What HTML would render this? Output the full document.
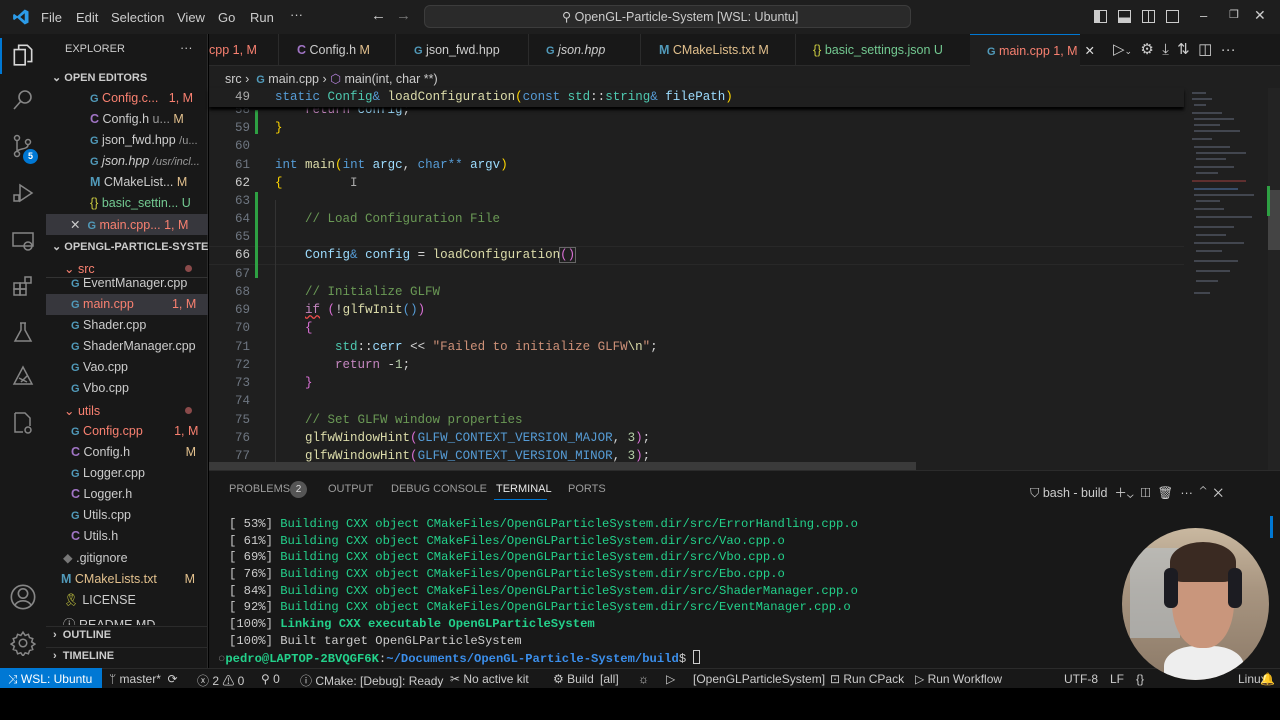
<!DOCTYPE html>
<html><head><meta charset="utf-8"><style>
*{margin:0;padding:0;box-sizing:border-box}
body{width:1280px;height:720px;background:#000;position:relative;overflow:hidden;font-family:"Liberation Sans",sans-serif;color:#ccc;font-size:12.5px}
.a{position:absolute;white-space:pre}
.k{color:#569cd6}.t{color:#4ec9b0}.f{color:#dcdcaa}.v{color:#9cdcfe}.c{color:#6a9955}.s{color:#ce9178}.p{color:#c586c0}.n{color:#b5cea8}.y{color:#ffd700}.pk{color:#da70d6}
.ln{position:absolute;left:215px;width:35px;text-align:right;color:#6e7681;font-family:"Liberation Mono",monospace;font-size:12.5px}
.cl{position:absolute;left:275px;font-family:"Liberation Mono",monospace;font-size:12.5px;color:#d4d4d4;white-space:pre}
.sb{position:absolute;white-space:pre;font-size:12.5px;color:#cccccc}
.st{position:absolute;white-space:pre;font-size:12px;color:#cccccc;top:672px}
.tl{position:absolute;left:229px;font-family:"Liberation Mono",monospace;font-size:12.2px;color:#ccc;white-space:pre}
.g{color:#23d18b}.gb{color:#23d18b;font-weight:bold}
.ic{color:#519aba;font-weight:bold;font-size:11px}
.cp{color:#a074c4;font-weight:bold}
.mm{position:absolute;height:2px;background:#5a6070;opacity:.6}
</style></head><body>
<div class="a" style="left:0;top:0;width:1280px;height:34px;background:#1e1e1e"></div>
<svg class="a" style="left:12px;top:8px" width="18" height="18" viewBox="0 0 24 24"><path d="M17 2 L22 4.5 V19.5 L17 22 L7 13 L3 16 L1.5 15 V9 L3 8 L7 11 Z M17 7 L11 12 L17 17 Z" fill="#2c9be8"/></svg>
<div class="a" style="left:41px;top:10px;font-size:13px">File</div>
<div class="a" style="left:76px;top:10px;font-size:13px">Edit</div>
<div class="a" style="left:111px;top:10px;font-size:13px">Selection</div>
<div class="a" style="left:177px;top:10px;font-size:13px">View</div>
<div class="a" style="left:218px;top:10px;font-size:13px">Go</div>
<div class="a" style="left:250px;top:10px;font-size:13px">Run</div>
<div class="a" style="left:290px;top:7px;font-size:13px">···</div>
<div class="a" style="left:371px;top:7px;font-size:15px;color:#ccc">←</div>
<div class="a" style="left:396px;top:7px;font-size:15px;color:#777">→</div>
<div class="a" style="left:424px;top:5px;width:487px;height:23px;background:#2a2a2a;border:1px solid #3c3c3c;border-radius:6px"></div>
<div class="a" style="left:562px;top:9px;font-size:12.5px">⚲ OpenGL-Particle-System [WSL: Ubuntu]</div>
<div class="a" style="left:1094px;top:10px;width:13px;height:13px;border:1.5px solid #ccc;background:linear-gradient(90deg,#ccc 45%,transparent 45%)"></div>
<div class="a" style="left:1118px;top:10px;width:13px;height:13px;border:1.5px solid #ccc;background:linear-gradient(0deg,#ccc 40%,transparent 40%)"></div>
<div class="a" style="left:1142px;top:10px;width:13px;height:13px;border:1.5px solid #ccc;background:linear-gradient(90deg,transparent 45%,#ccc 45%,#ccc 55%,transparent 55%)"></div>
<div class="a" style="left:1166px;top:10px;width:13px;height:13px;border:1.5px solid #ccc"></div>
<div class="a" style="left:1200px;top:8px;font-size:13px">–</div>
<div class="a" style="left:1229px;top:8px;font-size:11px">❐</div>
<div class="a" style="left:1254px;top:7px;font-size:14px">✕</div>
<div class="a" style="left:0;top:34px;width:46px;height:634px;background:#181818"></div>
<div class="a" style="left:0;top:38px;width:2px;height:36px;background:#0078d4"></div>
<svg class="a" style="left:10px;top:42px" width="26" height="26" viewBox="0 0 24 24" fill="none" stroke="#d7d7d7" stroke-width="1.5"><path d="M8 7V3h8l4 4v11h-4M4 7h10v14H4z"/></svg>
<svg class="a" style="left:11px;top:88px" width="24" height="24" viewBox="0 0 24 24" fill="none" stroke="#868686" stroke-width="1.6"><circle cx="14" cy="9" r="6"/><path d="M10 13L3 21"/></svg>
<svg class="a" style="left:11px;top:134px" width="24" height="26" viewBox="0 0 24 26" fill="none" stroke="#868686" stroke-width="1.5"><circle cx="6" cy="4" r="2.5"/><circle cx="6" cy="20" r="2.5"/><circle cx="17" cy="8" r="2.5"/><path d="M6 7v10M17 11c0 5-11 3-11 7"/></svg>
<div class="a" style="left:23px;top:149px;width:15px;height:15px;border-radius:50%;background:#0078d4;color:#fff;font-size:9px;text-align:center;line-height:15px;font-weight:bold">5</div>
<svg class="a" style="left:11px;top:181px" width="24" height="24" viewBox="0 0 24 24" fill="none" stroke="#868686" stroke-width="1.5"><path d="M9 4l12 8-12 8zM3 14h5v6H3z"/></svg>
<svg class="a" style="left:11px;top:229px" width="24" height="24" viewBox="0 0 24 24" fill="none" stroke="#868686" stroke-width="1.5"><rect x="2" y="4" width="20" height="13"/><circle cx="17" cy="17" r="4"/></svg>
<svg class="a" style="left:11px;top:274px" width="24" height="24" viewBox="0 0 24 24" fill="none" stroke="#868686" stroke-width="1.5"><rect x="3" y="9" width="6" height="6"/><rect x="9" y="9" width="6" height="6"/><rect x="3" y="15" width="6" height="6"/><rect x="9" y="15" width="6" height="6"/><rect x="14" y="3" width="6" height="6"/></svg>
<svg class="a" style="left:11px;top:320px" width="24" height="24" viewBox="0 0 24 24" fill="none" stroke="#868686" stroke-width="1.5"><path d="M9 3h6M10 3v7L4 21h16L14 10V3"/></svg>
<svg class="a" style="left:11px;top:364px" width="24" height="24" viewBox="0 0 24 24" fill="none" stroke="#868686" stroke-width="1.5"><path d="M12 3L3 20h18zM8 14l8 4M16 12l-6 6"/></svg>
<svg class="a" style="left:11px;top:410px" width="24" height="26" viewBox="0 0 24 26" fill="none" stroke="#868686" stroke-width="1.5"><path d="M4 3h10l5 5v8M4 3v19h8"/><circle cx="17" cy="20" r="3"/></svg>
<svg class="a" style="left:9px;top:583px" width="28" height="28" viewBox="0 0 24 24" fill="none" stroke="#868686" stroke-width="1.4"><circle cx="12" cy="12" r="10"/><circle cx="12" cy="9" r="4"/><path d="M5 19c3-5 11-5 14 0"/></svg>
<svg class="a" style="left:10px;top:630px" width="26" height="26" viewBox="0 0 24 24" fill="none" stroke="#868686" stroke-width="1.4"><circle cx="12" cy="12" r="3.5"/><path d="M12 2l2 3 3-1 1 3 3 1-1 3 3 2-3 2 1 3-3 1-1 3-3-1-2 3-2-3-3 1-1-3-3-1 1-3-3-2 3-2-1-3 3-1 1-3 3 1z"/></svg>
<div class="a" style="left:46px;top:34px;width:162px;height:634px;background:#181818;border-right:1px solid #2b2b2b"></div>
<div class="sb" style="left:65px;top:43px;font-size:11px">EXPLORER</div>
<div class="sb" style="left:180px;top:41px">···</div>
<div class="sb" style="left:52px;top:71px;font-size:11px;font-weight:bold">⌄ OPEN EDITORS</div>
<div class="sb" style="left:90px;top:91px"><span class="ic">G</span> <span style="color:#f88070">Config.c...</span>   <span style="color:#f88070">1, M</span></div>
<div class="sb" style="left:90px;top:112px"><span class="cp">C</span> Config.h <span style="color:#999">u...</span> <span style="color:#e2c08d">M</span></div>
<div class="sb" style="left:90px;top:133px"><span class="ic">G</span> json_fwd.hpp <span style="color:#999;font-size:11px">/u...</span></div>
<div class="sb" style="left:90px;top:154px"><span class="ic">G</span> <i>json.hpp</i> <span style="color:#999;font-size:11px"><i>/usr/incl...</i></span></div>
<div class="sb" style="left:90px;top:175px"><span style="color:#519aba;font-weight:bold">M</span> CMakeList... <span style="color:#e2c08d">M</span></div>
<div class="sb" style="left:90px;top:196px"><span style="color:#cbcb41">{}</span> <span style="color:#73c991">basic_settin...</span> <span style="color:#73c991">U</span></div>
<div class="a" style="left:46px;top:214px;width:162px;height:21px;background:#37373d"></div>
<div class="sb" style="left:70px;top:217px"><span>✕</span>  <span class="ic">G</span> <span style="color:#f88070">main.cpp...</span> <span style="color:#f88070">1, M</span></div>
<div class="sb" style="left:52px;top:240px;font-size:11px;font-weight:bold">⌄ OPENGL-PARTICLE-SYSTE...</div>
<div class="sb" style="left:64px;top:261px;color:#f88070">⌄ src</div>
<div class="a" style="left:185px;top:265px;width:7px;height:7px;border-radius:50%;background:#8a4a4a"></div>
<div class="a" style="left:46px;top:277px;width:162px;height:1px;background:#333"></div>
<div class="sb" style="left:71px;top:276px"><span class="ic">G</span> EventManager.cpp</div>
<div class="a" style="left:46px;top:294px;width:162px;height:21px;background:#37373d"></div>
<div class="sb" style="left:71px;top:297px"><span class="ic">G</span> <span style="color:#f88070">main.cpp</span>           <span style="color:#f88070">1, M</span></div>
<div class="sb" style="left:71px;top:318px"><span class="ic">G</span> Shader.cpp</div>
<div class="sb" style="left:71px;top:339px"><span class="ic">G</span> ShaderManager.cpp</div>
<div class="sb" style="left:71px;top:360px"><span class="ic">G</span> Vao.cpp</div>
<div class="sb" style="left:71px;top:381px"><span class="ic">G</span> Vbo.cpp</div>
<div class="sb" style="left:64px;top:403px;color:#f88070">⌄ utils</div>
<div class="a" style="left:185px;top:407px;width:7px;height:7px;border-radius:50%;background:#8a4a4a"></div>
<div class="sb" style="left:71px;top:424px"><span class="ic">G</span> <span style="color:#f88070">Config.cpp</span>         <span style="color:#f88070">1, M</span></div>
<div class="sb" style="left:71px;top:445px"><span class="cp">C</span> Config.h                <span style="color:#e2c08d">M</span></div>
<div class="sb" style="left:71px;top:466px"><span class="ic">G</span> Logger.cpp</div>
<div class="sb" style="left:71px;top:487px"><span class="cp">C</span> Logger.h</div>
<div class="sb" style="left:71px;top:508px"><span class="ic">G</span> Utils.cpp</div>
<div class="sb" style="left:71px;top:529px"><span class="cp">C</span> Utils.h</div>
<div class="sb" style="left:63px;top:550px"><span style="color:#777">◆</span> .gitignore</div>
<div class="sb" style="left:61px;top:572px"><span style="color:#519aba;font-weight:bold">M</span> <span style="color:#e2c08d">CMakeLists.txt</span>        <span style="color:#e2c08d">M</span></div>
<div class="sb" style="left:63px;top:593px"><span style="color:#cbcb41">🎗</span> LICENSE</div>
<div class="sb" style="left:63px;top:614px;height:11px;overflow:hidden">ⓘ README.MD</div>
<div class="a" style="left:46px;top:626px;width:162px;height:1px;background:#2b2b2b"></div>
<div class="sb" style="left:53px;top:629px;font-size:11px;font-weight:bold">›  OUTLINE</div>
<div class="a" style="left:46px;top:647px;width:162px;height:1px;background:#2b2b2b"></div>
<div class="sb" style="left:53px;top:650px;font-size:11px;font-weight:bold">›  TIMELINE</div>
<div class="a" style="left:209px;top:34px;width:1071px;height:32px;background:#181818;border-bottom:1px solid #2b2b2b"></div>
<div class="sb" style="left:209px;top:43px;color:#f88070">cpp 1, M</div>
<div class="a" style="left:278px;top:34px;width:1px;height:32px;background:#2b2b2b"></div>
<div class="sb" style="left:297px;top:43px"><span class="cp">C</span> Config.h <span style="color:#e2c08d">M</span></div>
<div class="a" style="left:395px;top:34px;width:1px;height:32px;background:#2b2b2b"></div>
<div class="sb" style="left:414px;top:43px"><span class="ic">G</span> json_fwd.hpp</div>
<div class="a" style="left:528px;top:34px;width:1px;height:32px;background:#2b2b2b"></div>
<div class="sb" style="left:546px;top:43px"><span class="ic">G</span> <i>json.hpp</i></div>
<div class="a" style="left:640px;top:34px;width:1px;height:32px;background:#2b2b2b"></div>
<div class="sb" style="left:659px;top:43px"><span style="color:#519aba;font-weight:bold">M</span> <span style="color:#e2c08d">CMakeLists.txt M</span></div>
<div class="a" style="left:795px;top:34px;width:1px;height:32px;background:#2b2b2b"></div>
<div class="sb" style="left:813px;top:43px"><span style="color:#cbcb41">{}</span> <span style="color:#73c991">basic_settings.json U</span></div>
<div class="a" style="left:970px;top:34px;width:110px;height:33px;background:#1f1f1f;border-top:1px solid #0078d4"></div>
<div class="sb" style="left:987px;top:43px"><span class="ic">G</span> <span style="color:#f88070">main.cpp 1, M</span>  <span style="color:#ddd">✕</span></div>
<div class="sb" style="left:1113px;top:40px;font-size:15px;color:#ccc">▷<span style="font-size:9px">⌄</span>  ⚙  ⤓  ⇅  ◫  ···</div>
<div class="a" style="left:209px;top:66px;width:1071px;height:404px;background:#1f1f1f"></div>
<div class="sb" style="left:225px;top:71px">src ›  <span class="ic">G</span> main.cpp › <span style="color:#b180d7">⬡</span> main(int, char **)</div>
<div class="a" style="left:209px;top:88px;width:975px;height:19px;background:#1f1f1f;box-shadow:0 3px 3px #000;z-index:2"></div>
<div class="ln" style="top:90px;z-index:3;color:#aaa">49</div>
<div class="cl" style="top:90px;z-index:3"><span class="k">static</span> <span class="t">Config</span><span class="k">&amp;</span> <span class="f">loadConfiguration</span><span class="y">(</span><span class="k">const</span> <span class="t">std</span>::<span class="t">string</span><span class="k">&amp;</span> <span class="v">filePath</span><span class="y">)</span></div>
<div class="ln" style="top:103px">58</div><div class="cl" style="top:103px">    <span class="p">return</span> <span class="v">config</span>;</div>
<div class="ln" style="top:121px">59</div><div class="cl" style="top:121px"><span class="y">}</span></div>
<div class="ln" style="top:139px">60</div>
<div class="ln" style="top:158px">61</div><div class="cl" style="top:158px"><span class="k">int</span> <span class="f">main</span><span class="y">(</span><span class="k">int</span> <span class="v">argc</span>, <span class="k">char</span><span class="k">**</span> <span class="v">argv</span><span class="y">)</span></div>
<div class="ln" style="top:176px;color:#ccc">62</div><div class="cl" style="top:176px"><span class="y">{</span>         <span style="color:#aaa">I</span></div>
<div class="ln" style="top:194px">63</div>
<div class="ln" style="top:212px">64</div><div class="cl" style="top:212px">    <span class="c">// Load Configuration File</span></div>
<div class="ln" style="top:230px">65</div>
<div class="a" style="left:209px;top:246px;width:975px;height:19px;border-top:1px solid #282828;border-bottom:1px solid #282828"></div>
<div class="ln" style="top:248px;color:#ccc">66</div><div class="cl" style="top:248px">    <span class="v">Config</span><span class="k">&amp;</span> <span class="v">config</span> = <span class="f">loadConfiguration</span><span class="pk" style="outline:1px solid #666">()</span></div>
<div class="ln" style="top:267px">67</div>
<div class="ln" style="top:285px">68</div><div class="cl" style="top:285px">    <span class="c">// Initialize GLFW</span></div>
<div class="ln" style="top:303px">69</div><div class="cl" style="top:303px">    <span class="p" style="text-decoration:underline wavy #f14c4c">if</span> <span class="pk">(</span>!<span class="f">glfwInit</span><span class="k">()</span><span class="pk">)</span></div>
<div class="ln" style="top:321px">70</div><div class="cl" style="top:321px">    <span class="pk">{</span></div>
<div class="ln" style="top:340px">71</div><div class="cl" style="top:340px">        <span class="t">std</span>::<span class="v">cerr</span> &lt;&lt; <span class="s">"Failed to initialize GLFW</span><span class="f">\n</span><span class="s">"</span>;</div>
<div class="ln" style="top:358px">72</div><div class="cl" style="top:358px">        <span class="p">return</span> -<span class="n">1</span>;</div>
<div class="ln" style="top:376px">73</div><div class="cl" style="top:376px">    <span class="pk">}</span></div>
<div class="ln" style="top:394px">74</div>
<div class="ln" style="top:413px">75</div><div class="cl" style="top:413px">    <span class="c">// Set GLFW window properties</span></div>
<div class="ln" style="top:431px">76</div><div class="cl" style="top:431px">    <span class="f">glfwWindowHint</span><span class="pk">(</span><span class="k">GLFW_CONTEXT_VERSION_MAJOR</span>, <span class="n">3</span><span class="pk">)</span>;</div>
<div class="ln" style="top:449px">77</div><div class="cl" style="top:449px">    <span class="f">glfwWindowHint</span><span class="pk">(</span><span class="k">GLFW_CONTEXT_VERSION_MINOR</span>, <span class="n">3</span><span class="pk">)</span>;</div>
<div class="a" style="left:255px;top:110px;width:3px;height:24px;background:#2ea043"></div>
<div class="a" style="left:255px;top:192px;width:3px;height:86px;background:#2ea043"></div>
<div class="a" style="left:275px;top:200px;width:1px;height:270px;background:#333"></div>
<div class="a" style="left:209px;top:462px;width:707px;height:8px;background:#3a3a3a"></div>
<!-- minimap -->
<div class="mm" style="left:1192px;top:92px;width:14px"></div>
<div class="mm" style="left:1192px;top:98px;width:20px"></div>
<div class="mm" style="left:1194px;top:104px;width:12px"></div>
<div class="mm" style="left:1192px;top:112px;width:30px"></div>
<div class="mm" style="left:1194px;top:118px;width:40px"></div>
<div class="mm" style="left:1194px;top:124px;width:26px"></div>
<div class="mm" style="left:1194px;top:130px;width:46px"></div>
<div class="mm" style="left:1192px;top:138px;width:20px"></div>
<div class="mm" style="left:1194px;top:146px;width:36px"></div>
<div class="mm" style="left:1196px;top:152px;width:50px"></div>
<div class="mm" style="left:1196px;top:158px;width:30px"></div>
<div class="mm" style="left:1194px;top:166px;width:40px"></div>
<div class="mm" style="left:1196px;top:172px;width:22px"></div>
<div class="mm" style="left:1192px;top:180px;width:54px;background:#8a3a3a"></div>
<div class="mm" style="left:1194px;top:188px;width:44px;background:#4a6a9a"></div>
<div class="mm" style="left:1194px;top:194px;width:60px"></div>
<div class="mm" style="left:1196px;top:200px;width:24px"></div>
<div class="mm" style="left:1194px;top:208px;width:30px"></div>
<div class="mm" style="left:1196px;top:216px;width:56px"></div>
<div class="mm" style="left:1194px;top:226px;width:40px"></div>
<div class="mm" style="left:1196px;top:234px;width:30px"></div>
<div class="mm" style="left:1194px;top:242px;width:50px"></div>
<div class="mm" style="left:1196px;top:250px;width:26px"></div>
<div class="mm" style="left:1194px;top:260px;width:44px"></div>
<div class="mm" style="left:1196px;top:270px;width:34px"></div>
<div class="mm" style="left:1196px;top:280px;width:22px"></div>
<div class="mm" style="left:1194px;top:292px;width:16px"></div>
<div class="a" style="left:1268px;top:88px;width:12px;height:382px;background:#232323"></div>
<div class="a" style="left:1268px;top:190px;width:12px;height:60px;background:#444"></div>
<div class="a" style="left:1267px;top:186px;width:3px;height:30px;background:#2ea043"></div>
<div class="a" style="left:209px;top:470px;width:1071px;height:198px;background:#181818;border-top:1px solid #2b2b2b"></div>
<div class="sb" style="left:229px;top:483px;font-size:11px;color:#9d9d9d">PROBLEMS</div>
<div class="a" style="left:290px;top:481px;width:17px;height:17px;border-radius:50%;background:#555;color:#ddd;font-size:10px;text-align:center;line-height:17px">2</div>
<div class="sb" style="left:328px;top:483px;font-size:11px;color:#9d9d9d">OUTPUT</div>
<div class="sb" style="left:391px;top:483px;font-size:11px;color:#9d9d9d">DEBUG CONSOLE</div>
<div class="sb" style="left:496px;top:483px;font-size:11px;color:#e7e7e7">TERMINAL</div>
<div class="a" style="left:494px;top:499px;width:53px;height:1px;background:#0078d4"></div>
<div class="sb" style="left:568px;top:483px;font-size:11px;color:#9d9d9d">PORTS</div>
<div class="sb" style="left:1030px;top:482px;color:#ccc">⛉ bash - build  ＋⌄  ◫  🗑  ···  ⌃  ✕</div>
<div class="tl" style="top:517px">[ 53%] <span class="g">Building CXX object CMakeFiles/OpenGLParticleSystem.dir/src/ErrorHandling.cpp.o</span></div>
<div class="tl" style="top:534px">[ 61%] <span class="g">Building CXX object CMakeFiles/OpenGLParticleSystem.dir/src/Vao.cpp.o</span></div>
<div class="tl" style="top:550px">[ 69%] <span class="g">Building CXX object CMakeFiles/OpenGLParticleSystem.dir/src/Vbo.cpp.o</span></div>
<div class="tl" style="top:567px">[ 76%] <span class="g">Building CXX object CMakeFiles/OpenGLParticleSystem.dir/src/Ebo.cpp.o</span></div>
<div class="tl" style="top:584px">[ 84%] <span class="g">Building CXX object CMakeFiles/OpenGLParticleSystem.dir/src/ShaderManager.cpp.o</span></div>
<div class="tl" style="top:600px">[ 92%] <span class="g">Building CXX object CMakeFiles/OpenGLParticleSystem.dir/src/EventManager.cpp.o</span></div>
<div class="tl" style="top:617px">[100%] <span class="gb">Linking CXX executable OpenGLParticleSystem</span></div>
<div class="tl" style="top:634px">[100%] Built target OpenGLParticleSystem</div>
<div class="tl" style="top:650px;left:218px"><span style="color:#777">○</span><span class="gb">pedro@LAPTOP-2BVQGF6K</span>:<span style="color:#3b8eea;font-weight:bold">~/Documents/OpenGL-Particle-System/build</span>$ <span style="display:inline-block;width:7px;height:14px;border:1px solid #ccc;vertical-align:-2px"></span></div>
<div class="a" style="left:1270px;top:516px;width:3px;height:22px;background:#0078d4"></div>
<!-- status bar -->
<div class="a" style="left:0;top:668px;width:1280px;height:20px;background:#181818;border-top:1px solid #2b2b2b"></div>
<div class="a" style="left:0;top:668px;width:102px;height:20px;background:#0078d4"></div>
<div class="st" style="left:8px;color:#fff">⤨ WSL: Ubuntu</div>
<div class="st" style="left:109px">ᛘ master*  ⟳</div>
<div class="st" style="left:197px">ⓧ 2 ⚠ 0</div>
<div class="st" style="left:261px">⚲ 0</div>
<div class="st" style="left:300px">ⓘ CMake: [Debug]: Ready</div>
<div class="st" style="left:450px">✂ No active kit</div>
<div class="st" style="left:553px">⚙ Build</div>
<div class="st" style="left:600px">[all]</div>
<div class="st" style="left:638px">☼</div>
<div class="st" style="left:666px">▷</div>
<div class="st" style="left:693px">[OpenGLParticleSystem]</div>
<div class="st" style="left:830px">⊡ Run CPack</div>
<div class="st" style="left:915px">▷ Run Workflow</div>
<div class="st" style="left:1064px">UTF-8</div>
<div class="st" style="left:1110px">LF</div>
<div class="st" style="left:1136px">{}</div>
<div class="st" style="left:1238px">Linux</div>
<div class="st" style="left:1260px">🔔</div>
<!-- webcam -->
<div class="a" style="left:1122px;top:528px;width:147px;height:152px;border-radius:50%;overflow:hidden;background:linear-gradient(180deg,#c9b8a0 0%,#a89580 40%,#8c7a68 100%)">
 <div class="a" style="left:8px;top:20px;width:50px;height:90px;background:#b8c2c8;opacity:.6"></div>
 <div class="a" style="left:42px;top:118px;width:80px;height:50px;border-radius:40% 40% 0 0;background:#eee"></div>
 <div class="a" style="left:50px;top:20px;width:62px;height:100px;border-radius:45%;background:#c9967c"></div>
 <div class="a" style="left:48px;top:14px;width:66px;height:40px;border-radius:50% 50% 20% 20%;background:#3a2a22"></div>
 <div class="a" style="left:42px;top:40px;width:14px;height:40px;border-radius:6px;background:#1c1c22"></div>
 <div class="a" style="left:106px;top:40px;width:14px;height:40px;border-radius:6px;background:#1c1c22"></div>
</div>
</body></html>
